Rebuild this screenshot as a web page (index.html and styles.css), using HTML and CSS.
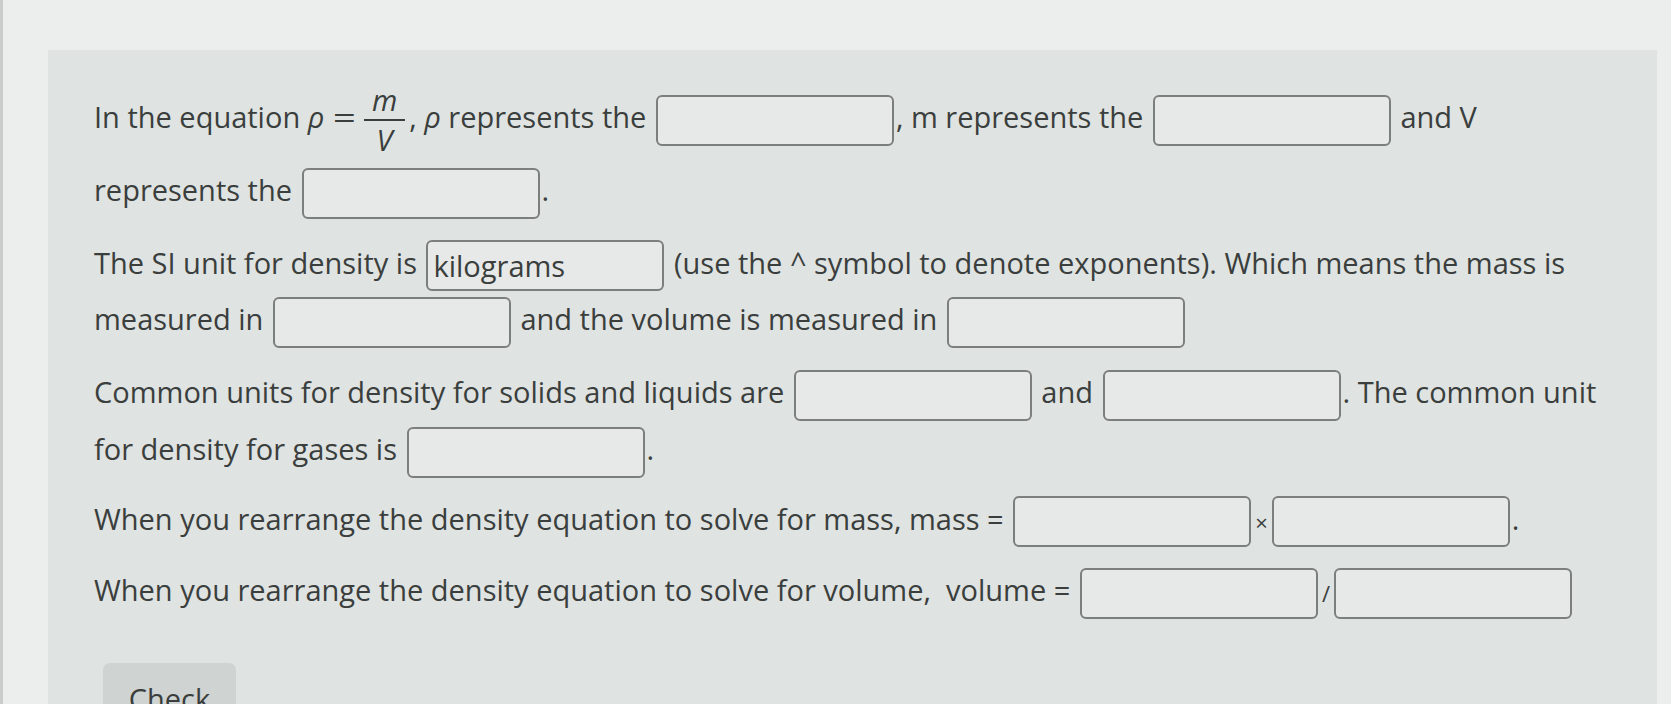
FILE: index.html
```html
<!DOCTYPE html>
<html lang="en">
<head>
<meta charset="utf-8">
<title>Density</title>
<link rel="stylesheet" href="styles.css">
</head>
<body>
<div class="page">
  <div class="panel">
    <p class="para first">In the equation <span class="math">ρ</span><span class="op">=</span><span class="frac"><span class="num">m</span><span class="den">V</span></span><span class="comma">,</span> <span class="math">ρ</span> represents the <input class="blank" type="text">, m represents the <input class="blank" type="text"> and V<br>represents the <input class="blank" type="text">.</p>
    <p class="para">The SI unit for density is <input class="blank" type="text" value="kilograms"> (use the ^ symbol to denote exponents). Which means the mass is<br>measured in <input class="blank" type="text"> and the volume is measured in <input class="blank" type="text"></p>
    <p class="para tight">Common units for density for solids and liquids are <input class="blank" type="text"> and <input class="blank" type="text">. The common unit<br>for density for gases is <input class="blank" type="text">.</p>
    <p class="para tighter">When you rearrange the density equation to solve for mass, mass = <input class="blank" type="text"><span class="sep">×</span><input class="blank" type="text">.</p>
    <p class="para">When you rearrange the density equation to solve for volume, &nbsp;volume = <input class="blank" type="text"><span class="sep">/</span><input class="blank" type="text"></p>
    <div class="actions"><button class="check" type="button">Check</button></div>
  </div>
</div>
</body>
</html>
```
FILE: styles.css
```css
html, body {
  margin: 0;
  padding: 0;
  height: 100%;
  overflow: hidden;
}
body {
  background: #eceeed;
  font-family: "Open Sans", "Noto Sans", sans-serif;
  color: #3a3e3d;
}
.page {
  padding: 50px 14px 0 45px;
  height: 100%;
  box-sizing: border-box;
  border-left: 3px solid #c9cccb;
}
.panel {
  background: #dfe3e1;
  height: 100%;
  padding: 28px 20px 0 46px;
  box-sizing: border-box;
}
.para {
  margin: 0 0 16px;
  font-size: 29px;
  line-height: 56px;
  white-space: nowrap;
}
.para.tight {
  margin-bottom: 13px;
}
.para.tighter {
  margin-bottom: 12px;
}
.math {
  font-style: italic;
}
.op {
  display: inline-block;
  margin: 0 11px 0 12px;
  transform: scaleX(1.4);
}
.frac {
  display: inline-flex;
  flex-direction: column;
  align-items: center;
  vertical-align: middle;
  margin: 4px 0;
  font-style: italic;
  line-height: 36px;
}
.frac .num {
  border-bottom: 2px solid #3a3e3d;
  padding: 0 8px 1px;
}
.frac .den {
  padding-top: 1px;
}
.comma {
  margin-left: 4px;
}
.blank {
  display: inline-block;
  vertical-align: middle;
  width: 238px;
  height: 51px;
  box-sizing: border-box;
  margin: 0 2px;
  padding: 0 5px;
  border: 2px solid #7b7f7d;
  border-radius: 6px;
  background: #e6e9e7;
  font-family: inherit;
  font-size: 29px;
  color: #3a3e3d;
  outline: none;
}
.sep {
  display: inline-block;
  vertical-align: middle;
  font-size: 22px;
  margin: 0 2px;
}
.actions {
  padding-top: 26px;
}
.check {
  margin-left: 9px;
  width: 133px;
  height: 54px;
  border: none;
  border-radius: 7px;
  background: #cfd3d1;
  font-family: inherit;
  font-size: 29px;
  color: #3a3e3d;
  padding: 16px 0 0;
}
```
